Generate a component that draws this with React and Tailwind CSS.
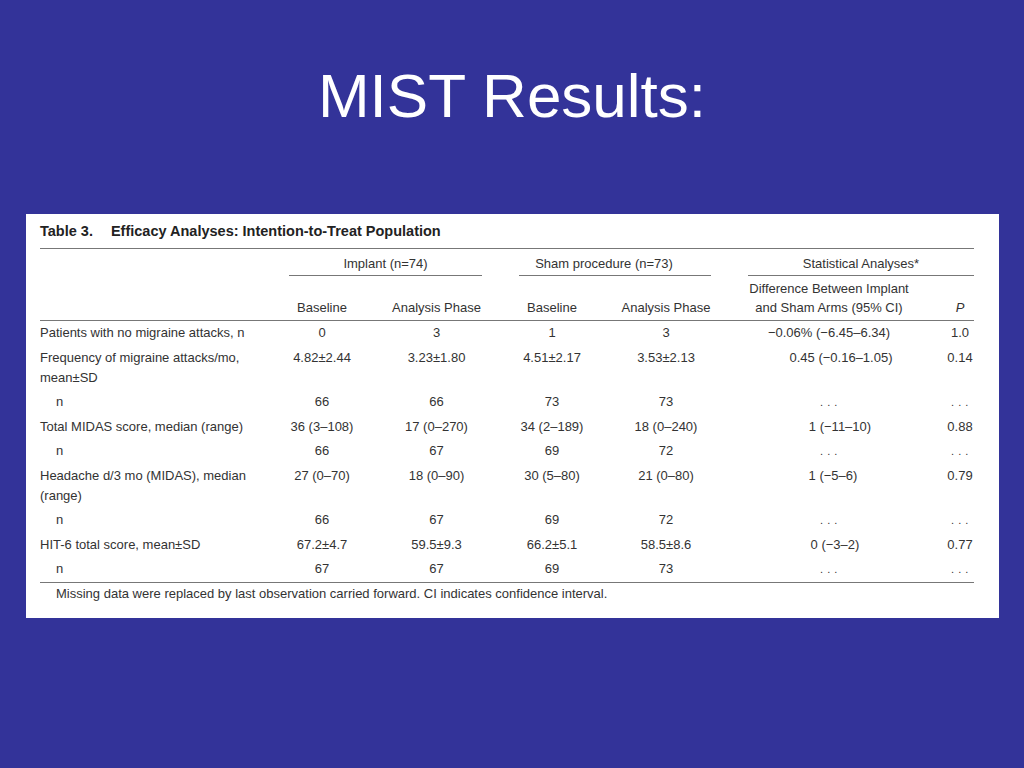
import React from 'react'

const grid = 'grid grid-cols-[249px_66px_36px_91px_37px_66px_36px_90px_37px_162px_36px_28px]'

const rows = [
  { label: ['Patients with no migraine attacks, n'], cells: ['0', '3', '1', '3', '−0.06% (−6.45–6.34)', '1.0'], diff: '' },
  { label: ['Frequency of migraine attacks/mo,', 'mean±SD'], cells: ['4.82±2.44', '3.23±1.80', '4.51±2.17', '3.53±2.13', '0.45 (−0.16–1.05)', '0.14'], diff: 'pl-[24px]' },
  { label: ['n'], indent: true, cells: ['66', '66', '73', '73', '. . .', '. . .'], diff: '' },
  { label: ['Total MIDAS score, median (range)'], cells: ['36 (3–108)', '17 (0–270)', '34 (2–189)', '18 (0–240)', '1 (−11–10)', '0.88'], diff: 'pl-[22px]' },
  { label: ['n'], indent: true, cells: ['66', '67', '69', '72', '. . .', '. . .'], diff: '' },
  { label: ['Headache d/3 mo (MIDAS), median', '(range)'], cells: ['27 (0–70)', '18 (0–90)', '30 (5–80)', '21 (0–80)', '1 (−5–6)', '0.79'], diff: 'pl-[8px]' },
  { label: ['n'], indent: true, cells: ['66', '67', '69', '72', '. . .', '. . .'], diff: '' },
  { label: ['HIT-6 total score, mean±SD'], cells: ['67.2±4.7', '59.5±9.3', '66.2±5.1', '58.5±8.6', '0 (−3–2)', '0.77'], diff: 'pl-[12px]' },
  { label: ['n'], indent: true, cells: ['67', '67', '69', '73', '. . .', '. . .'], diff: '' },
]

const starts = ['col-start-2', 'col-start-4', 'col-start-6', 'col-start-8', 'col-start-10', 'col-start-12']

function DataRow({ row }) {
  return (
    <div className={`${grid} py-[2.25px] leading-[20px]`}>
      <div className={`col-start-1 ${row.indent ? 'pl-[16px]' : ''}`}>
        {row.label.map((l, i) => (
          <div key={i}>{l}</div>
        ))}
      </div>
      {row.cells.map((c, i) => (
        <div
          key={i}
          className={`${starts[i]} text-center whitespace-nowrap ${i === 4 ? row.diff : ''} ${c === '. . .' ? 'text-[11px] tracking-[0.5px]' : ''}`}
        >
          {c}
        </div>
      ))}
    </div>
  )
}

export default function App() {
  return (
    <div className="w-full h-[768px] bg-[#333399] flex flex-col overflow-hidden">
      {/* Slide title */}
      <h1
        className="pt-[65px] h-[127px] text-center text-white text-[62px] leading-none"
        style={{ fontFamily: '"Liberation Sans", Arial, sans-serif' }}
      >
        MIST Results:
      </h1>

      {/* Table image */}
      <div
        className="ml-[26px] mt-[87px] w-[973px] h-[404px] bg-white pt-[8px] pl-[14px] text-[13px] text-[#333]"
        style={{ fontFamily: '"Liberation Sans", Arial, sans-serif' }}
      >
        <div className="w-[934px]">
          <div className="flex leading-[18px] text-[14.5px] font-bold text-[#222]">
            <span>Table 3.</span>
            <span className="ml-[18px]">Efficacy Analyses: Intention-to-Treat Population</span>
          </div>

          {/* Spanner headers */}
          <div className={`${grid} mt-[8px] border-t border-[#777] leading-[20px]`}>
            <div className="col-start-2 col-span-3 border-b border-[#777] pt-[5px] pb-[1px] text-center">
              Implant (n=74)
            </div>
            <div className="col-start-6 col-span-3 border-b border-[#777] pt-[5px] pb-[1px] pr-[22px] text-center">
              Sham procedure (n=73)
            </div>
            <div className="col-start-10 col-span-3 border-b border-[#777] pt-[5px] pb-[1px] text-center">
              Statistical Analyses*
            </div>
          </div>

          {/* Column headers */}
          <div className={`${grid} h-[45px] border-b border-[#777] leading-[19px] items-end pb-[3.5px]`}>
            <div className="col-start-2 text-center whitespace-nowrap">Baseline</div>
            <div className="col-start-4 text-center whitespace-nowrap">Analysis Phase</div>
            <div className="col-start-6 text-center whitespace-nowrap">Baseline</div>
            <div className="col-start-8 text-center whitespace-nowrap">Analysis Phase</div>
            <div className="col-start-10 text-center whitespace-nowrap">
              <div>Difference Between Implant</div>
              <div>and Sham Arms (95% CI)</div>
            </div>
            <div className="col-start-12 text-center italic">P</div>
          </div>

          {rows.map((r, i) => (
            <DataRow key={i} row={r} />
          ))}

          <div className="border-t border-[#777] pt-[1px] pl-[16px] leading-[20px]">
            Missing data were replaced by last observation carried forward. CI indicates confidence interval.
          </div>
        </div>
      </div>
    </div>
  )
}
